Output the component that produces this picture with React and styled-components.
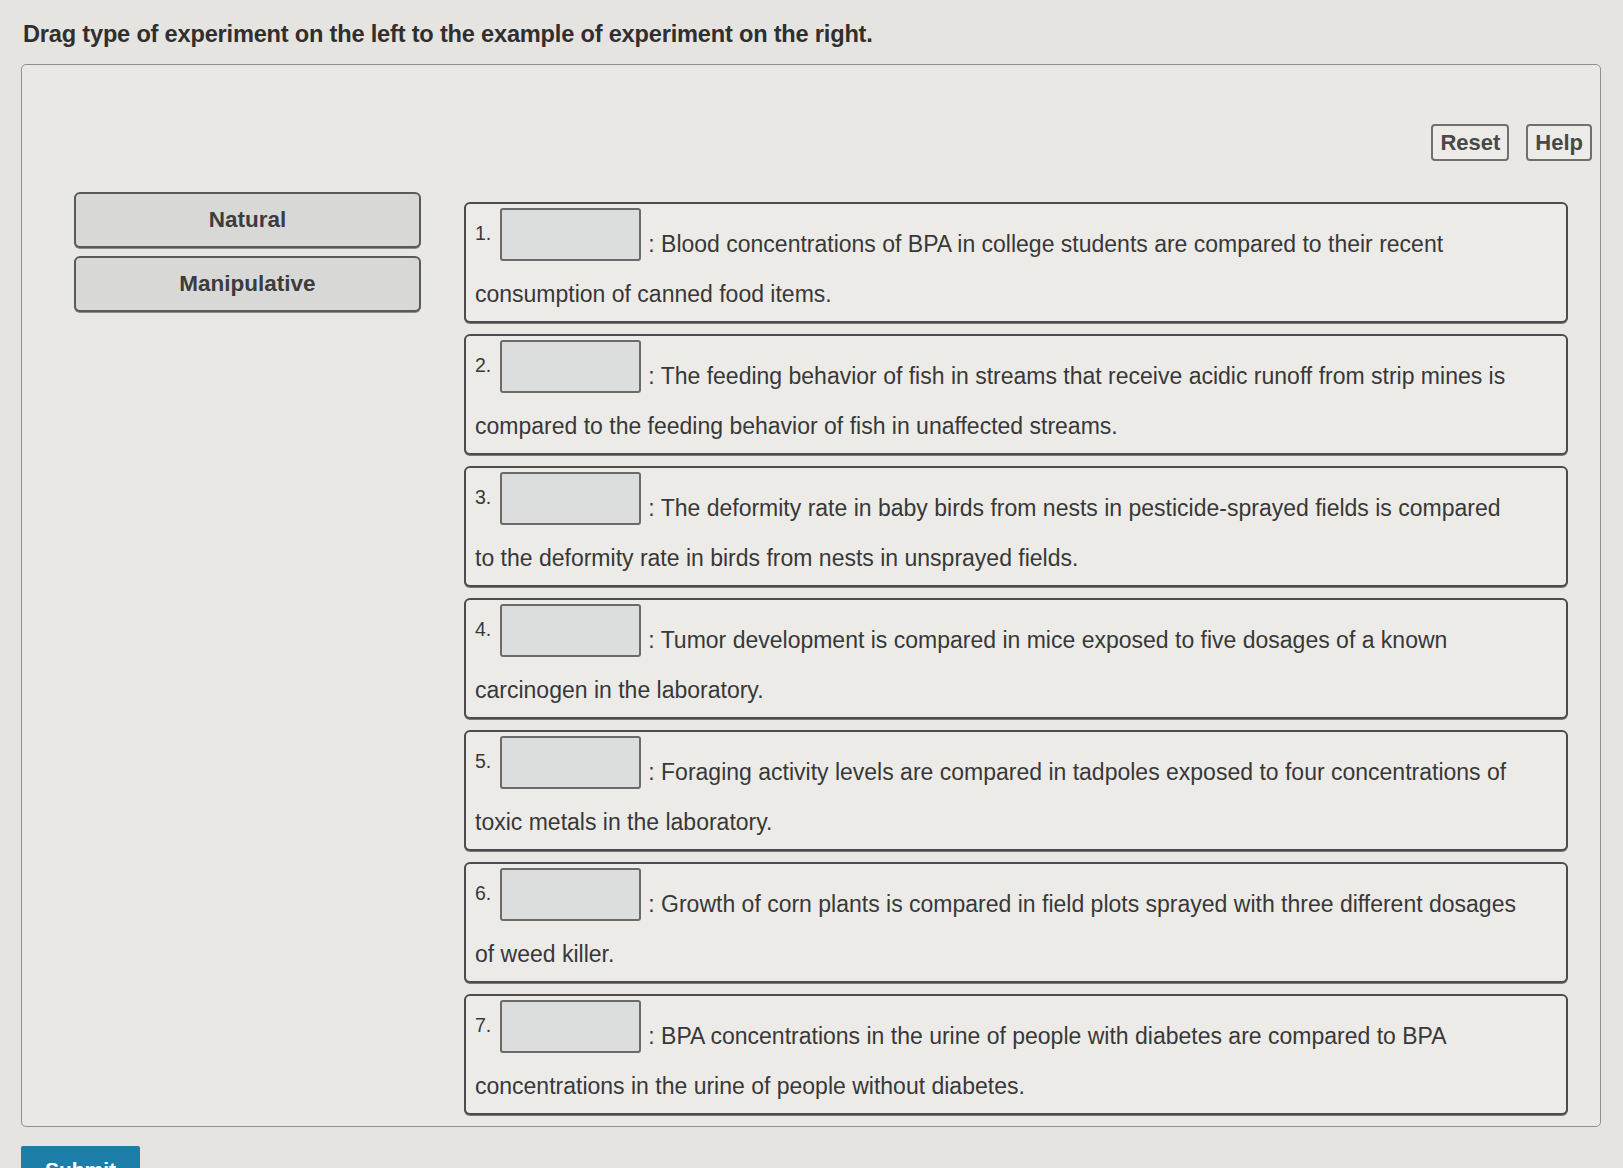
import React from "react";
import styled, { createGlobalStyle } from "styled-components";

const GlobalStyle = createGlobalStyle`
  html, body {
    margin: 0;
    padding: 0;
    background: #e5e4e1;
    overflow: hidden;
  }
  body {
    font-family: "Liberation Sans", Arial, sans-serif;
    color: #3a3a3a;
  }
`;

const Page = styled.div`
  width: 1623px;
  height: 1168px;
  padding: 21px 21px 0 21px;
  box-sizing: border-box;
`;

const Heading = styled.h1`
  margin: 0 0 16px 2px;
  font-size: 23.6px;
  font-weight: 700;
  color: #2f2f2f;
  letter-spacing: -0.2px;
`;

const Panel = styled.div`
  width: 1580px;
  box-sizing: border-box;
  border: 1.5px solid #8f8f8d;
  border-radius: 5px;
  background: #e9e8e5;
  padding: 59px 8px 11px 52px;
`;

const Toolbar = styled.div`
  display: flex;
  justify-content: flex-end;
  gap: 17px;
  margin-bottom: 41px;
`;

const ToolButton = styled.button`
  font-family: "Liberation Sans", Arial, sans-serif;
  font-size: 22px;
  font-weight: 700;
  color: #484848;
  background: #ecebe8;
  border: 2px solid #6f6f6f;
  border-radius: 4px;
  height: 37px;
  padding: 0 7px;
  cursor: pointer;
`;

const Board = styled.div`
  display: flex;
  align-items: flex-start;
  gap: 43px;
`;

const Choices = styled.div`
  display: flex;
  flex-direction: column;
  gap: 8px;
  width: 347px;
  flex-shrink: 0;
  margin-top: -10px;
`;

const Choice = styled.div`
  height: 56px;
  box-sizing: border-box;
  border: 2px solid #5a5a5a;
  border-radius: 6px;
  background: #d8d8d7;
  box-shadow: 0 1px 0 #8a8a8a;
  display: flex;
  align-items: center;
  justify-content: center;
  font-size: 22.5px;
  font-weight: 700;
  color: #3c3c3c;
`;

const Items = styled.div`
  display: flex;
  flex-direction: column;
  gap: 11px;
  width: 1104px;
`;

const Item = styled.div`
  height: 121px;
  box-sizing: border-box;
  border: 2.5px solid #4c4c4c;
  border-radius: 6px;
  background: #ecebe8;
  box-shadow: 0 1px 0 #777;
  padding: 4px 43px 0 9px;
  font-size: 23px;
  line-height: 50px;
  color: #383838;
`;

const Num = styled.span`
  font-size: 19.5px;
  vertical-align: 12px;
  margin-right: 9px;
`;

const Drop = styled.span`
  display: inline-block;
  width: 141px;
  height: 53px;
  box-sizing: border-box;
  border: 2px solid #6a6a6a;
  border-radius: 3px;
  background: #dcdddd;
  vertical-align: -9px;
  margin-right: 7px;
`;

const Footer = styled.div`
  display: flex;
  align-items: flex-start;
  gap: 38px;
  margin-top: 19px;
`;

const SubmitButton = styled.button`
  font-family: "Liberation Sans", Arial, sans-serif;
  width: 119px;
  height: 44px;
  border: none;
  border-radius: 2px;
  background: #1d7eaa;
  color: #fff;
  font-size: 21px;
  font-weight: 700;
  padding-top: 4px;
`;

const AnswerLink = styled.span`
  font-size: 21px;
  color: #1f4f73;
  padding-top: 17px;
`;

const examples = [
  "Blood concentrations of BPA in college students are compared to their recent consumption of canned food items.",
  "The feeding behavior of fish in streams that receive acidic runoff from strip mines is compared to the feeding behavior of fish in unaffected streams.",
  "The deformity rate in baby birds from nests in pesticide-sprayed fields is compared to the deformity rate in birds from nests in unsprayed fields.",
  "Tumor development is compared in mice exposed to five dosages of a known carcinogen in the laboratory.",
  "Foraging activity levels are compared in tadpoles exposed to four concentrations of toxic metals in the laboratory.",
  "Growth of corn plants is compared in field plots sprayed with three different dosages of weed killer.",
  "BPA concentrations in the urine of people with diabetes are compared to BPA concentrations in the urine of people without diabetes.",
];

const App = () => {
  return (
    <Page>
      <GlobalStyle />
      <Heading>Drag type of experiment on the left to the example of experiment on the right.</Heading>
      <Panel>
        <Toolbar>
          <ToolButton>Reset</ToolButton>
          <ToolButton>Help</ToolButton>
        </Toolbar>
        <Board>
          <Choices>
            <Choice>Natural</Choice>
            <Choice>Manipulative</Choice>
          </Choices>
          <Items>
            {examples.map((text, i) => (
              <Item key={i}>
                <Num>{i + 1}.</Num>
                <Drop />: {text}
              </Item>
            ))}
          </Items>
        </Board>
      </Panel>
      <Footer>
        <SubmitButton>Submit</SubmitButton>
        <AnswerLink>Request Answer</AnswerLink>
      </Footer>
    </Page>
  );
};

export default App;
